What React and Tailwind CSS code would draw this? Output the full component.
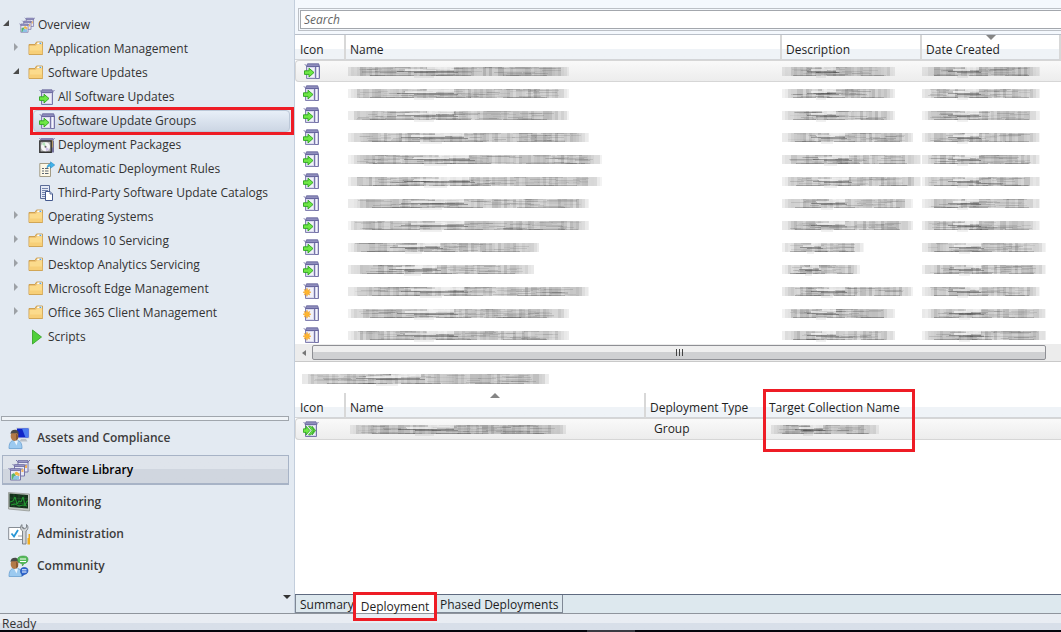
import clsx from 'clsx'

const treeItems = [
  { label: 'Overview', level: 0, icon: 'library', open: true },
  { label: 'Application Management', level: 1, icon: 'folder', open: false },
  { label: 'Software Updates', level: 1, icon: 'folder', open: true },
  { label: 'All Software Updates', level: 2, icon: 'update' },
  { label: 'Software Update Groups', level: 2, icon: 'group', selected: true },
  { label: 'Deployment Packages', level: 2, icon: 'package' },
  { label: 'Automatic Deployment Rules', level: 2, icon: 'rule' },
  { label: 'Third-Party Software Update Catalogs', level: 2, icon: 'catalog' },
  { label: 'Operating Systems', level: 1, icon: 'folder', open: false },
  { label: 'Windows 10 Servicing', level: 1, icon: 'folder', open: false },
  { label: 'Desktop Analytics Servicing', level: 1, icon: 'folder', open: false },
  { label: 'Microsoft Edge Management', level: 1, icon: 'folder', open: false },
  { label: 'Office 365 Client Management', level: 1, icon: 'folder', open: false },
  { label: 'Scripts', level: 1, icon: 'script' },
]

const workspaces = [
  { label: 'Assets and Compliance', icon: 'assets' },
  { label: 'Software Library', icon: 'library', active: true },
  { label: 'Monitoring', icon: 'monitoring' },
  { label: 'Administration', icon: 'administration' },
  { label: 'Community', icon: 'community' },
]

// widths of the redacted values in each column
const groups = [
  { icon: 'group', name: 221, description: 113, created: 118 },
  { icon: 'group', name: 221, description: 113, created: 118 },
  { icon: 'group', name: 221, description: 113, created: 118 },
  { icon: 'group', name: 241, description: 131, created: 118 },
  { icon: 'group', name: 254, description: 139, created: 118 },
  { icon: 'group', name: 254, description: 139, created: 118 },
  { icon: 'group', name: 241, description: 131, created: 118 },
  { icon: 'group', name: 241, description: 131, created: 118 },
  { icon: 'group', name: 191, description: 82, created: 124 },
  { icon: 'group', name: 186, description: 78, created: 124 },
  { icon: 'groupNew', name: 241, description: 131, created: 118 },
  { icon: 'groupNew', name: 221, description: 113, created: 124 },
  { icon: 'groupNew', name: 221, description: 113, created: 124 },
]

const Box = () => (
  <>
    <path d="M2.500 3.500h11v12h-11z" fill="#d5d5ea" stroke="#7775a8" />
    <path d="M3 .8h10l1 2.700H2z" fill="#8f8dbd" stroke="#6a689d" strokeWidth=".8" />
    <path d="M.5 1 3 3.500M15.500 1 13 3.500" stroke="#7775a8" fill="none" />
    <path d="M4 5h8v9H4z" fill="#ededf7" />
  </>
)

const GroupBox = () => (
  <>
    <path d="M2.500 3.500h9v12h-9z" fill="#dadaee" stroke="#8482b2" />
    <path d="M11.500 3.500h4v12h-4z" fill="#d3d3ea" stroke="#7775a8" />
    <path d="M3.500 .8h11.200l.8 2.700H2.500z" fill="#8f8dbd" stroke="#605e98" strokeWidth=".8" />
    <path d="M.8 1.200 3 3.500" stroke="#7775a8" />
    <path d="M13.500 4v11" stroke="#f6f6fc" />
    <path d="M4 5h6v9H4z" fill="#f1f1f9" />
  </>
)

const GreenArrow = () => (
  <path d="M.5 7.800h4.500V5.200l5 4.300-5 4.500v-2.600H.5z" fill="#6fe846" stroke="#2aa31c" strokeWidth=".9" />
)

const LibraryBox = ({ x, y }) => (
  <g transform={`translate(${x} ${y})`}>
    <path d="M2 3h10v10H2z" fill="#e8e8f5" stroke="#7775a8" />
    <path d="M2 1.500h10v2H2z" fill="#9896c6" stroke="#6a689d" strokeWidth=".7" />
    <path d="M0 1l2 2M14 1l-2 2" stroke="#7775a8" />
    <path d="M9 6h2v3H9z" fill="#f3b25a" />
  </g>
)

const Person = () => (
  <>
    <path d="M1 21.500c0-5 1.500-8 5-8h3c3.500 0 5 3 5 8z" fill="#9ccaf0" stroke="#6a9fd0" strokeWidth=".8" />
    <path d="M6 13.500h4l-1.500 5z" fill="#eef5fb" />
    <ellipse cx="6.500" cy="9" rx="3.800" ry="5" fill="#b27a48" />
    <path d="M2.500 7C2.500 4.300 4.200 2.800 7 2.800s4 2.200 3.800 5.700c-1-1-1-2-1.800-2.500-2 .5-4.500-.3-6.500 1z" fill="#4a4a4a" />
    <path d="M8 6.500c1.500 1 2.500 2.500 2 5.500l-2 1.500z" fill="#8a5930" />
  </>
)

const glyphs = {
  folder: (
    <>
      <path d="M1 3.500h6L8.500 1H14.500v12.500H1z" fill="#eec374" stroke="#c99b48" strokeWidth=".9" />
      <path d="M9.500 1.500h4.500v1.800H9z" fill="#fff" />
      <path d="M11.500 1.700h1.800v1.200h-1.800z" fill="#3d9be0" />
      <path d="M1.500 5h6L9 3.700h5.200v9.400H1.500z" fill="#fbdb8c" />
      <path d="M1.500 9.500h12.700v3.600H1.500z" fill="#f7cf78" />
    </>
  ),
  update: <><Box /><GreenArrow /></>,
  group: <><GroupBox /><GreenArrow /></>,
  groupNew: (
    <>
      <GroupBox />
      <path d="M4 5.200l.8 2.200 2-1-.9 2 2.100.8-2.100.8.9 2-2-.9L4 13.300l-.8-2.200-2 .9.9-2L0 9.200l2.100-.8-.9-2 2 1z" fill="#ffb52e" stroke="#ef9d1c" strokeWidth=".5" />
    </>
  ),
  deployment: (
    <>
      <Box />
      <path d="M.5 7.800h2.500V5.200l4 4.300-4 4.500v-2.600H.5z" fill="#6fe846" stroke="#2aa31c" strokeWidth=".8" />
      <path d="M5.500 5.200l3.500 4.300L5.500 14l2 0 3.500-4.500-3.500-4.300z" fill="#6fe846" stroke="#2aa31c" strokeWidth=".7" />
      <path d="M9 5.200l3.500 4.300L9 14l2-4.500z" fill="#6fe846" stroke="#2aa31c" strokeWidth=".8" />
    </>
  ),
  package: (
    <>
      <path d="M2 1h12v3H2z" fill="#8583b5" />
      <path d="M.5 1 2 3M15.500 1 14 3" stroke="#7775a8" />
      <path d="M12 3.500h3v12h-3z" fill="#77759f" />
      <path d="M11 3.500h2.500v7H11z" fill="#f2c230" />
      <path d="M.8 4h11.400v11.300H.8z" fill="#b5b5b5" stroke="#333" strokeWidth="1.400" />
      <circle cx="6.500" cy="9.700" r="4.500" fill="#f6f6f6" />
      <path d="M6.500 9.700 3 7.200A4.300 4.300 0 0 1 6 5.300z" fill="#b5e3ba" />
      <path d="M6.500 9.700l3.600 2.200a4.300 4.300 0 0 1-3 2.200z" fill="#d2c3ea" />
      <circle cx="6.500" cy="9.700" r="1" fill="#666" />
    </>
  ),
  rule: (
    <>
      <path d="M.8 2.500h10.700v13H.8z" fill="#fdf8e6" stroke="#a39c86" />
      <path d="M3 7.500h2M6 7.500h3.500M3 10h2M6 10h3.500M3 12.500h2M6 12.500h3.500" stroke="#5c6673" />
      <path d="M8 7c.2-3 1.500-4 3.500-4V.8L15.800 4l-4.300 3.300V5.200C10 5.200 9 5.700 8 7z" fill="#3fb2ea" stroke="#1f86c4" strokeWidth=".5" />
    </>
  ),
  catalog: (
    <>
      <path d="M1.500 .5h9v13h-9z" fill="#e4eaf6" stroke="#5b6c98" />
      <path d="M3 3.500h6M3 5.500h6M3 7.500h4M3 9.500h3M3 11.500h3" stroke="#7585ad" />
      <path d="M6.500 6.500h4.500L13.500 9v6.500h-7z" fill="#fff" stroke="#43588d" />
      <path d="M11 6.500V9h2.500" fill="#c6d2ea" stroke="#43588d" strokeWidth=".8" />
    </>
  ),
  script: <path d="M4.500 1 13.500 8 4.500 15z" fill="#4fd03a" stroke="#3aa52b" strokeWidth=".9" />,
}

const largeGlyphs = {
  library: (
    <>
      <LibraryBox x={8} y={0} />
      <LibraryBox x={4.5} y={4} />
      <LibraryBox x={0.5} y={8} />
      <path d="M3.500 15.500 6 14l3 4.500v2H3.500z" fill="#57b26b" />
      <path d="M6 17h5v3.500H4.500z" fill="#8cc3e6" />
      <circle cx="8.500" cy="14.500" r="1.700" fill="#f0b93c" />
    </>
  ),
  assets: (
    <>
      <path d="M8 .5h13.500v11H8z" fill="#cfd6de" />
      <path d="M9 1.500h11.500v9H9z" fill="#1024c8" />
      <path d="M14 1.500h6.500v9h-3z" fill="#4a7bf0" />
      <path d="M13 12h5l1.500 2.500h-8z" fill="#b9bfc6" />
      <Person />
    </>
  ),
  monitoring: (
    <>
      <path d="M.5 1.500 21.500 3v17L.5 18z" fill="#c4c8c4" stroke="#8b8f8b" strokeWidth=".7" />
      <path d="M1.500 2.500 20 4v13.500L1.500 16z" fill="#13301a" />
      <path d="M6 3v13M11 3.300v13.500M16 3.700v13.500M2 7l18 .8M2 12l18 .8" stroke="#285c2f" strokeWidth=".6" />
      <path d="M2 11l3-1 2-4 2 7 2-3 2 1 2-5 2 8 2-4h1M3 14l4-1 4 2 4-1 4 1" stroke="#22a833" strokeWidth=".9" fill="none" />
    </>
  ),
  administration: (
    <>
      <path d="M.7 4.500h15v12H.7z" fill="#fff" stroke="#878d94" />
      <path d="M3.500 10.500l2.500 3L10 7" fill="none" stroke="#2796d6" strokeWidth="1.800" />
      <path d="M10 13h4" stroke="#9aa0a8" />
      <path d="M14 1.500v3l2 1.500 2.500-1.500v-3c2 1.500 2 5-.5 6.500V21h-3.500V8c-2.500-1.500-2.500-5-.5-6.500z" fill="#d2d5d8" stroke="#74797f" strokeWidth=".9" />
      <path d="M20.500 11h1.500v4h-1.500zM19.500 15H22v6.500h-2.500z" fill="#f0ab1d" />
    </>
  ),
  community: (
    <>
      <Person />
      <path d="M9.500 4.500c0-2 2-3.500 5.500-3.500s5 1 5 3.500-2 4-4 4l-1.500 2.500-.5-2.500c-2.500 0-4.500-2-4.500-4z" fill="#55bb59" stroke="#389540" strokeWidth=".6" />
      <path d="M12 4h6M12 6.500h6" stroke="#fff" />
      <path d="M12.500 15.500c0-2 1.500-3 3.500-3s4 .5 4 3-1.500 3.500-3 3.700L14 21v-2c-1 0-1.500-1.500-1.500-3.500z" fill="#2d66d0" stroke="#1f4ca6" strokeWidth=".6" />
      <path d="M14 14.800h4.500M14 17h4.500" stroke="#fff" />
    </>
  ),
}

function Icon({ name }) {
  if (name === 'library') {
    return (
      <svg viewBox="0 0 22 22" fill="none" aria-hidden="true" className="size-4 shrink-0">
        {largeGlyphs.library}
      </svg>
    )
  }
  return (
    <svg viewBox="0 0 16 16" fill="none" aria-hidden="true" className="size-4 shrink-0">
      {glyphs[name]}
    </svg>
  )
}

// Blurred-out value: grey blocks with darker horizontal streaks
function Redacted({ width, seed = 1, height = 9 }) {
  let state = seed * 7919 + 13
  const rand = () => {
    state = (state * 1103515245 + 12345) % 2147483648
    return state / 2147483648
  }
  const blocks = []
  for (let x = 0; x < width; x += 3) {
    const edge = Math.min(1, (x + 6) / 18, (width - x + 3) / 16)
    blocks.push(
      <rect key={`b${x}`} x={x} y="0" width={Math.min(3, width - x)} height={height} fill="#000" opacity={edge * (0.15 + rand() * 0.13)} />
    )
  }
  const streaks = []
  for (let i = 0; i < width / 4; i++) {
    const w = 8 + rand() * 22
    const x = 6 + rand() * Math.max(1, width - w - 14)
    streaks.push(
      <rect key={`s${i}`} x={Math.round(x)} y={Math.floor(rand() * height)} width={Math.round(w)} height="1" fill="#000" opacity={0.03 + rand() * 0.1} />
    )
  }
  const at = part => Math.round(width * part)
  return (
    <svg width={width} height={height} viewBox={`0 0 ${width} ${height}`} aria-hidden="true" className="block overflow-visible" shapeRendering="crispEdges">
      {blocks}
      {streaks}
      <path d={`M${at(0.26)} 2h${at(0.1)}v-2h${at(0.12)}v3h-${at(0.08)}v1h-${at(0.14)}z`} fill="#fff" opacity=".6" />
      <rect x={at(0.22)} y="4" width={at(0.26)} height="1" fill="#000" opacity=".28" />
      <rect x={at(0.3)} y="5" width={at(0.2)} height="1" fill="#000" opacity=".28" />
      <rect x={at(0.3)} y={height} width={at(0.09)} height="2" fill="#000" opacity=".06" />
      <rect x={at(0.1)} y={height - 1} width={at(0.2)} height="1" fill="#000" opacity=".22" />
      <rect x={at(0.4)} y={height - 1} width={at(0.16)} height="1" fill="#000" opacity=".2" />
      <rect x={at(0.7)} y={height - 1} width={at(0.2)} height="1" fill="#000" opacity=".18" />
    </svg>
  )
}

function Highlight({ className }) {
  return <span aria-hidden="true" className={clsx('pointer-events-none absolute z-10 border-3 border-[#ee1c25]', className)} />
}

function Expander({ open }) {
  return (
    <svg viewBox="0 0 8 8" aria-hidden="true" className="size-2 shrink-0">
      {open
        ? <path d="M7 1v6H1z" fill="#4b4b4b" />
        : <path d="M2 0l4 4-4 4z" fill="#9da1a6" />}
    </svg>
  )
}

function TreeItem({ item }) {
  const { label, level, icon, open, selected } = item
  return (
    <li className="relative">
      <button
        type="button"
        aria-current={selected ? 'true' : undefined}
        className={clsx(
          'flex h-6 w-full items-center text-left whitespace-nowrap',
          level === 0 && 'gap-[3px] pl-0.5',
          level === 1 && 'gap-1 pl-3',
          level === 2 && 'gap-[3px] pl-[39px]',
        )}
      >
        {selected && <span className="absolute inset-y-px right-1 left-[33px] rounded-sm border border-[#bcc8d8] bg-linear-to-b from-[#e8eff8] to-[#ccd6e4]" />}
        {level < 2 && (
          <span className={clsx('-mt-1', level === 0 ? 'mr-1.5' : 'mr-1')}>
            {open === undefined ? <span className="block w-2" /> : <Expander open={open} />}
          </span>
        )}
        <span className="relative"><Icon name={icon} /></span>
        <span className="relative">{label}</span>
      </button>
      {selected && <Highlight className="-inset-y-[2px] right-0 left-[30px]" />}
    </li>
  )
}

function Sidebar() {
  return (
    <aside className="flex w-[295px] shrink-0 flex-col border-r border-[#c3cedc] bg-[#e3eaf2] text-[#333]">
      <nav aria-label="Software Library" className="flex-1 pt-[13px]">
        <ul>
          {treeItems.map(item => <TreeItem key={item.label} item={item} />)}
        </ul>
      </nav>
      <div className="mr-[5px] ml-px h-[5px] border border-[#a0a6ad] bg-[#f0f4f8]" />
      <nav aria-label="Workspaces" className="flex flex-col gap-0.5 pt-0.5 pr-[5px] pl-0.5">
        {workspaces.map(({ label, icon, active }) => (
          <button
            key={label}
            type="button"
            className={clsx(
              'flex h-[30px] items-center gap-[7px] border pl-[5px] text-left font-semibold',
              active
                ? 'border-[#a7b3c6] border-b-2 bg-linear-to-b from-[#dfe4eb] from-50% to-[#d0d6df] to-50% text-black'
                : 'border-transparent text-[#3c3c3c]',
            )}
          >
            <svg viewBox="0 0 22 22" fill="none" aria-hidden="true" className="size-[22px] shrink-0">
              {largeGlyphs[icon]}
            </svg>
            {label}
          </button>
        ))}
      </nav>
      <div className="flex h-8 items-end justify-end pr-[3px] pb-3.5">
        <button type="button" aria-label="Configure buttons" className="block">
          <svg viewBox="0 0 8 4" aria-hidden="true" className="block h-1 w-2"><path d="M0 0h8L4 4z" fill="#333" /></svg>
        </button>
      </div>
    </aside>
  )
}

function HeaderCell({ children, sort, first, last }) {
  return (
    <th
      scope="col"
      className={clsx(
        'relative h-[25px] border-b border-b-[#d3d5d8] pt-1.5 text-left font-normal whitespace-nowrap',
        first ? 'pl-[5px]' : 'pl-1',
        !last && 'border-r-2 border-r-[#d8d8d8]',
      )}
    >
      {children}
      {sort && (
        <svg viewBox="0 0 10 5" aria-hidden="true" className="absolute top-0 left-1/2 h-[5px] w-2.5 -translate-x-1/2">
          <path d={sort === 'desc' ? 'M0 0h10L5 5z' : 'M0 5h10L5 0z'} fill="#858585" />
        </svg>
      )}
    </th>
  )
}

const headRow = 'bg-linear-to-b from-white from-55% to-[#eff3f7] to-55%'
const selectedRow = 'bg-linear-to-b from-[#fafafa] to-[#ececec] [&>td]:border-y [&>td]:border-[#d6d6d6] [&>td:first-child]:rounded-l [&>td:first-child]:border-l'

function GroupsTable() {
  return (
    <table className="w-full table-fixed border-separate border-spacing-0 border-t border-[#b9bfc8]">
      <colgroup>
        <col className="w-[51px]" />
        <col />
        <col className="w-[140px]" />
        <col className="w-[139px]" />
      </colgroup>
      <thead>
        <tr className={headRow}>
          <HeaderCell first>Icon</HeaderCell>
          <HeaderCell>Name</HeaderCell>
          <HeaderCell>Description</HeaderCell>
          <HeaderCell sort="desc">Date Created</HeaderCell>
        </tr>
      </thead>
      <tbody>
        {groups.map((g, i) => (
          <tr key={i} className={clsx('h-[22px]', i === 0 && selectedRow)}>
            <td className="p-0 pl-2"><Icon name={g.icon} /></td>
            <td className="p-0 pl-0.5"><Redacted width={g.name} seed={i + 1} /></td>
            <td className="p-0"><Redacted width={g.description} seed={i + 21} /></td>
            <td className="p-0"><Redacted width={g.created} seed={i + 41} /></td>
          </tr>
        ))}
      </tbody>
    </table>
  )
}

function HorizontalScrollbar() {
  return (
    <div className="relative -mt-0.5 flex h-[18px] items-center border-b border-[#c9c9c9] bg-[#ececec]">
      <button type="button" aria-label="Scroll left" className="flex w-[17px] justify-center">
        <svg viewBox="0 0 4 6" aria-hidden="true" className="h-1.5 w-1"><path d="M4 0v6L0 3z" fill="#777" /></svg>
      </button>
      <div className="mr-[15px] flex h-[15px] flex-1 items-center justify-center gap-0.5 rounded-xs border border-[#8e8f94] bg-linear-to-b from-[#efefef] from-50% to-[#cfd0d2] to-50%">
        <span className="h-[7px] w-px bg-[#444]" />
        <span className="h-[7px] w-px bg-[#444]" />
        <span className="h-[7px] w-px bg-[#444]" />
      </div>
    </div>
  )
}

function DeploymentTable() {
  return (
    <table className="w-full table-fixed border-separate border-spacing-0">
      <colgroup>
        <col className="w-[51px]" />
        <col className="w-[300px]" />
        <col className="w-[118px]" />
        <col className="w-[150px]" />
        <col />
      </colgroup>
      <thead>
        <tr className={headRow}>
          <HeaderCell first>Icon</HeaderCell>
          <HeaderCell sort="asc">Name</HeaderCell>
          <HeaderCell last>Deployment Type</HeaderCell>
          <th scope="col" className="relative border-b border-b-[#d3d5d8] pt-1.5 pl-[5px] text-left font-normal whitespace-nowrap">
            Target Collection Name
            <Highlight className="-top-1 -right-px -left-px h-[63px]" />
          </th>
          <td className="border-b border-b-[#d3d5d8]" />
        </tr>
      </thead>
      <tbody>
        <tr className={clsx('h-[22px]', selectedRow)}>
          <td className="p-0 pl-[7px]"><Icon name="deployment" /></td>
          <td className="p-0 pl-1"><Redacted width={216} seed={71} /></td>
          <td className="p-0 pl-2">Group</td>
          <td className="p-0 pl-[7px]"><Redacted width={108} seed={72} /></td>
          <td className="p-0" />
        </tr>
      </tbody>
    </table>
  )
}

function DetailTabs() {
  return (
    <div role="tablist" className="flex h-[19px] border-t border-[#5f6b80] bg-[#dde8ee]">
      <button type="button" role="tab" aria-selected="false" className="w-[58px] border-b border-l border-[#7f8895] pt-0.5 pl-1 text-left">Summary</button>
      <button type="button" role="tab" aria-selected="true" className="relative w-[84px] bg-white pt-1 text-center">
        Deployment
        <Highlight className="inset-x-0 -top-[3px] h-[29px]" />
      </button>
      <button type="button" role="tab" aria-selected="false" className="border-r border-b border-[#7f8895] pt-0.5 pr-1 pl-[3px] whitespace-nowrap">Phased Deployments</button>
    </div>
  )
}

export default function App() {
  return (
    <div className="flex h-screen flex-col overflow-hidden bg-white font-['Open_Sans','Noto_Sans',sans-serif] text-[12px] leading-4 text-[#1e1e1e]">
      <div className="flex min-h-0 flex-1">
        <Sidebar />
        <main className="flex min-w-0 flex-1 flex-col">
          <div className="h-[34px] bg-[#f4f8fd] pt-2 pl-[3px]">
            <div className="border border-r-0 border-[#bcc0c6] p-px pr-0">
              <input
                type="text"
                aria-label="Search"
                placeholder="Search"
                className="block h-[19px] w-full border border-r-0 border-[#a3a7ad] bg-white px-[3px] italic outline-none placeholder:text-[#666]"
              />
            </div>
          </div>
          <GroupsTable />
          <HorizontalScrollbar />
          <section className="min-h-0 flex-1">
            <h2 className="flex h-[31px] items-center pt-0.5 pl-[7px]">
              <Redacted width={247} seed={90} height={10} />
            </h2>
            <DeploymentTable />
          </section>
          <DetailTabs />
        </main>
      </div>
      <footer className="h-[17px] border-t border-[#8f959d] bg-linear-to-b from-[#e9edf3] from-55% to-[#d8dfe9] to-55% pl-0.5 leading-5 text-[#333]">Ready</footer>
      <div className="flex h-0.5 justify-center bg-[#05050c]">
        <div className="ml-[161px] w-12 bg-[#3a3a42]" />
      </div>
    </div>
  )
}
